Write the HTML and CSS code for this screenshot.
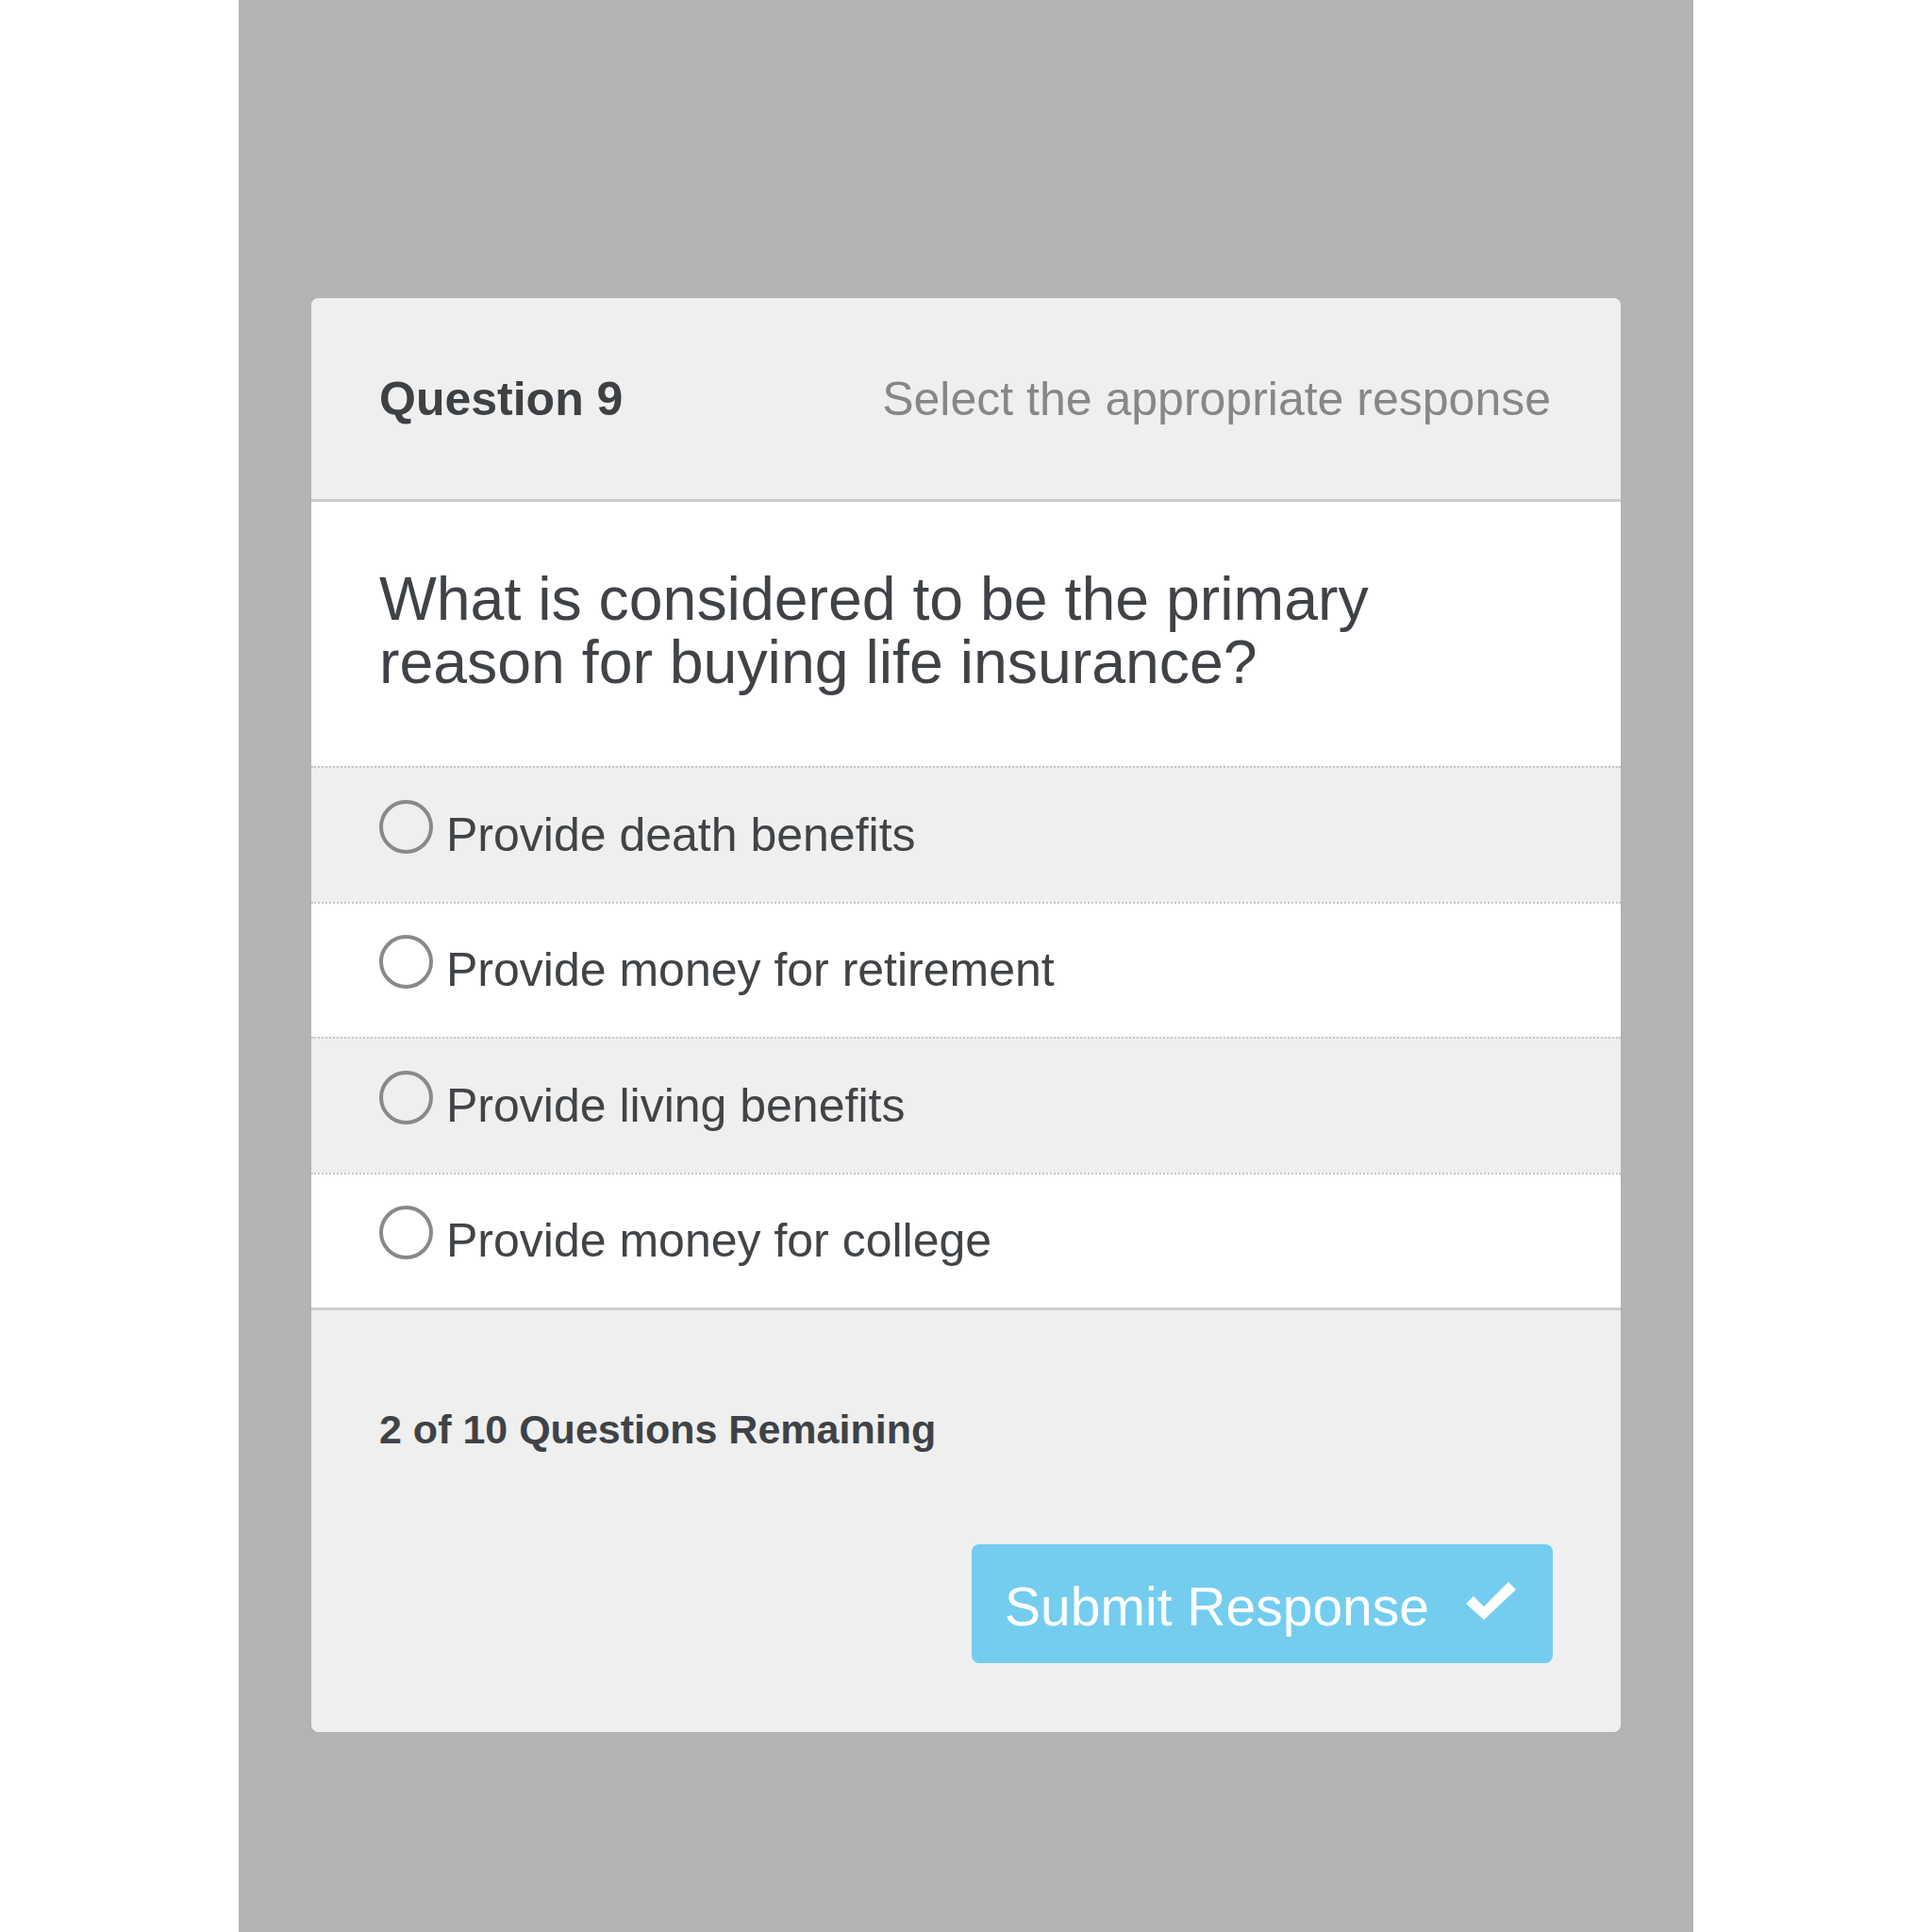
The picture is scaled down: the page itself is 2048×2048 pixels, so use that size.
FILE: index.html
```html
<!DOCTYPE html>
<html lang="en">
<head>
<meta charset="utf-8">
<title>Question 9</title>
<link rel="stylesheet" href="styles.css">
</head>
<body>
<div class="frame">
  <div class="card">
    <header class="card-head">
      <h2 class="q-num">Question 9</h2>
      <span class="q-hint">Select the appropriate response</span>
    </header>
    <section class="q-body">
      <p class="q-text">What is considered to be the primary reason for buying life insurance?</p>
    </section>
    <ul class="options">
      <li class="option alt"><span class="radio"></span><span class="label">Provide death benefits</span></li>
      <li class="option"><span class="radio"></span><span class="label">Provide money for retirement</span></li>
      <li class="option alt"><span class="radio"></span><span class="label">Provide living benefits</span></li>
      <li class="option"><span class="radio"></span><span class="label">Provide money for college</span></li>
    </ul>
    <footer class="card-foot">
      <p class="remaining">2 of 10 Questions Remaining</p>
      <button class="submit" type="button">
        <span class="submit-label">Submit Response</span>
        <svg class="check" viewBox="0 0 53 40" width="53" height="40" aria-hidden="true">
          <polygon points="0,23 8,15 19,26 45,0 53,8 19,40" fill="#ffffff"/>
        </svg>
      </button>
    </footer>
  </div>
</div>
</body>
</html>
```

FILE: styles.css
```css
html, body {
  margin: 0;
  padding: 0;
  background: #ffffff;
}

body {
  font-family: "Liberation Sans", Arial, Helvetica, sans-serif;
  color: #3f4246;
}

.frame {
  width: 1542px;
  height: 2048px;
  margin: 0 auto;
  background: #b3b3b3;
  padding-top: 316px;
  box-sizing: border-box;
}

.card {
  width: 1388px;
  margin: 0 auto;
  border-radius: 8px;
  overflow: hidden;
  background: #efefef;
}

.card-head {
  height: 216px;
  box-sizing: border-box;
  border-bottom: 3px solid #c9cdcd;
  background: #efefef;
  display: flex;
  align-items: center;
  justify-content: space-between;
  padding: 0 74px 0 72px;
}

.q-num {
  margin: 0;
  font-size: 50px;
  font-weight: 700;
  color: #3e4144;
}

.q-hint {
  font-size: 50px;
  color: #868788;
}

.q-body {
  background: #ffffff;
  height: 280px;
  box-sizing: border-box;
  padding: 70px 74px 0 72px;
}

.q-text {
  margin: 0;
  font-size: 64.4px;
  line-height: 67px;
  color: #3f4246;
}

.options {
  list-style: none;
  margin: 0;
  padding: 0;
}

.option {
  height: 143.5px;
  box-sizing: border-box;
  border-top: 2px dotted #c3c7c8;
  background: #ffffff;
  display: flex;
  align-items: center;
  padding-left: 72px;
  gap: 14px;
}

.option.alt {
  background: #efefef;
}

.radio {
  width: 57px;
  height: 57px;
  box-sizing: border-box;
  border: 4px solid #88898b;
  border-radius: 50%;
  margin-bottom: 17px;
  flex: none;
}

.label {
  font-size: 50px;
  color: #414447;
}

.card-foot {
  height: 450px;
  box-sizing: border-box;
  border-top: 3px solid #c9cdcd;
  background: #efefef;
  padding: 101px 72px 73px 72px;
  display: flex;
  flex-direction: column;
}

.remaining {
  margin: 0;
  font-size: 43px;
  line-height: 50px;
  font-weight: 700;
  color: #3f4246;
}

.submit {
  margin-top: 97px;
  align-self: flex-end;
  height: 126px;
  border: none;
  border-radius: 8px;
  background: #74cdef;
  color: #ffffff;
  font-family: "Liberation Sans", Arial, Helvetica, sans-serif;
  font-size: 57px;
  padding: 0 39px 0 35px;
  display: flex;
  align-items: center;
  gap: 39px;
}

.submit-label {
  padding-top: 6px;
}

.check {
  display: block;
  flex: none;
  margin-bottom: 6px;
}
```
